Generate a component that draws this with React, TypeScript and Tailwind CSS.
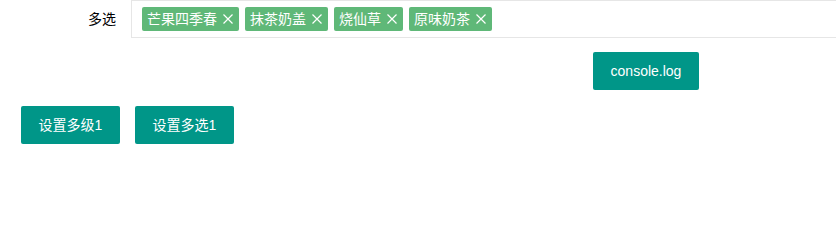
import React from "react";

const tags = ["芒果四季春", "抹茶奶盖", "烧仙草", "原味奶茶"];

function X() {
  return (
    <svg width="10" height="10" viewBox="0 0 10 10" className="ml-[6px]">
      <path d="M0.5 0.5 L9.5 9.5 M9.5 0.5 L0.5 9.5" stroke="white" strokeWidth="1.2" fill="none" />
    </svg>
  );
}

export default function App() {
  return (
    <div className="w-[836px] h-[237px] overflow-hidden bg-white" style={{ fontFamily: '"Liberation Sans", "Noto Sans CJK SC", sans-serif' }}>
      <div className="flex items-stretch h-[38px]">
        <div className="w-[131px] shrink-0 pr-[15px] flex items-center justify-end text-[14px] text-black">多选</div>
        <div className="flex-1 border border-[#e6e6e6] flex items-center gap-[6px] pl-[10px] -mr-[2px]">
          {tags.map((t) => (
            <span key={t} className="h-[24px] bg-[#5FB878] rounded-[2px] text-white text-[14px] flex items-center pl-[5px] pr-[6px] leading-none">
              {t}
              <X />
            </span>
          ))}
        </div>
      </div>
      <div className="mt-[14px] ml-[593px]">
        <button className="h-[38px] w-[106px] bg-[#009688] text-white text-[14px] rounded-[2px]">console.log</button>
      </div>
      <div className="mt-[16px] ml-[21px] flex gap-[15px]">
        <button className="h-[38px] w-[99px] bg-[#009688] text-white text-[14px] rounded-[2px]">设置多级1</button>
        <button className="h-[38px] w-[99px] bg-[#009688] text-white text-[14px] rounded-[2px]">设置多选1</button>
      </div>
    </div>
  );
}
